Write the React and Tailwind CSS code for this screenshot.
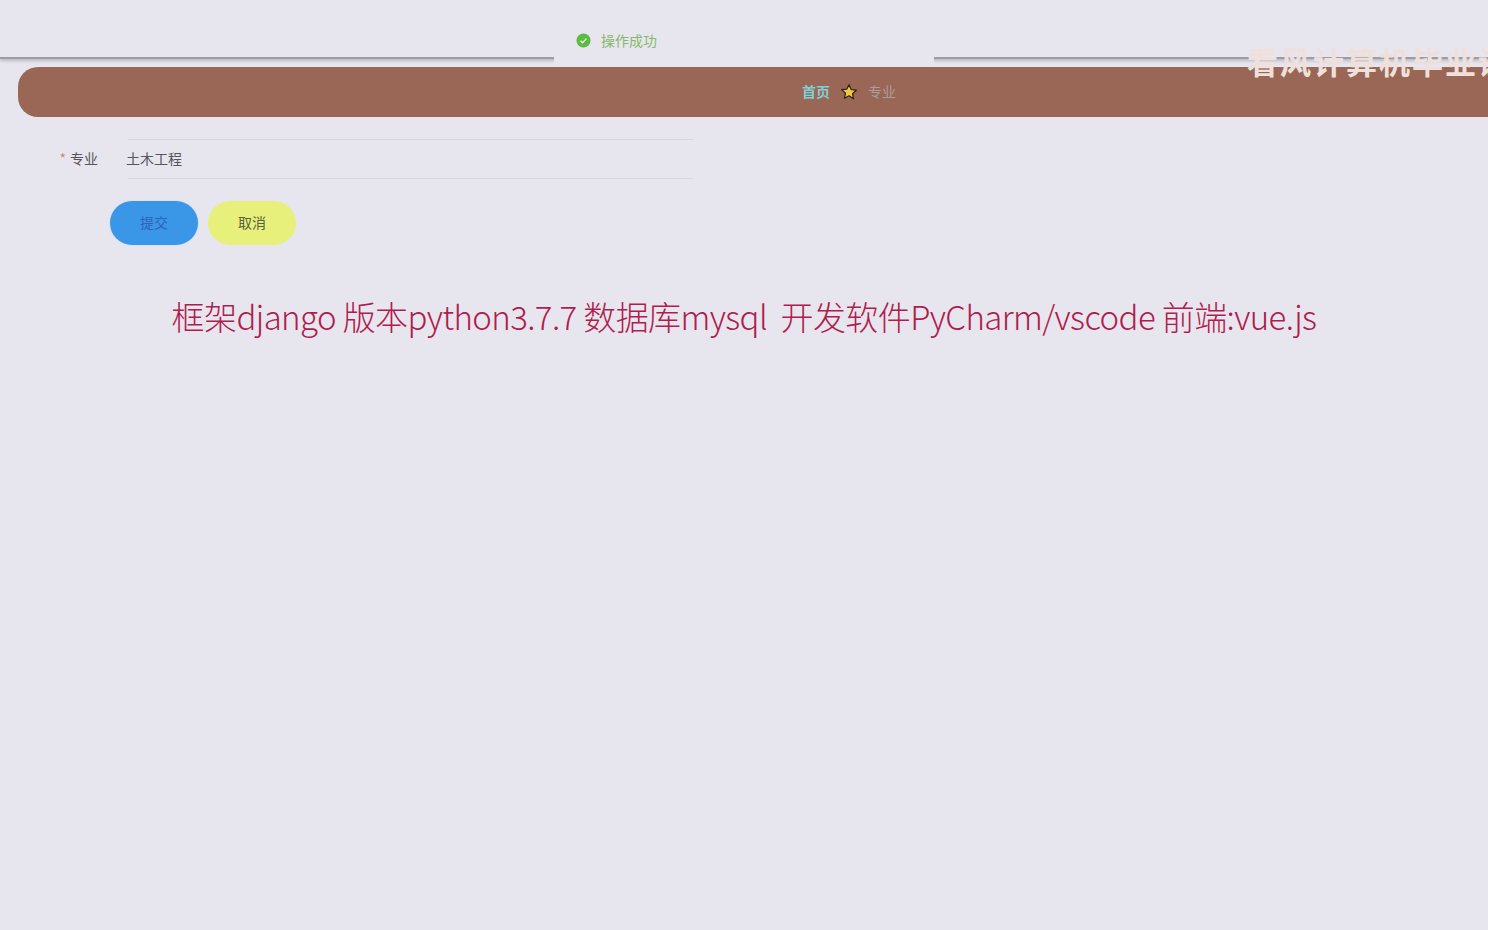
export default function App() {
  const cjk = "font-['Noto_Sans_CJK_SC',sans-serif]";
  return (
    <div className={`relative h-[930px] w-[1488px] overflow-hidden bg-[#e7e6ee] ${cjk}`}>
      <header className="h-[59px] border-b-2 border-[#9c9ca6] shadow-[0_2px_3px_rgba(120,120,130,0.4)]" />
      <nav className="ml-[18px] mt-[8px] flex h-[50px] items-center rounded-l-[20px] bg-[#9a6655] pb-[2px] pl-[784px] text-[14px] leading-none">
        <span className="font-bold text-[#7fd0d6]">首页</span>
        <svg className="mx-[10px] mt-[2px] h-[18px] w-[18px]" viewBox="0 0 24 24">
          <path d="M12 2.5l2.9 6.3 6.8.8-5 4.7 1.3 6.8L12 17l-6 3.4 1.3-6.8-5-4.7 6.8-.8z" fill="#f3c840" stroke="#2b2015" strokeWidth="1.6" strokeLinejoin="round" />
        </svg>
        <span className="text-[#aa9d9d]">专业</span>
      </nav>
      <form className="pt-[22px]">
        <div className="flex h-[40px] items-center">
          <label className="w-[98px] pb-[2px] text-right text-[14px] text-[#55555c]">
            <span className="mr-[4px] text-[#c98a8a]">*</span>专业
          </label>
          <div className="ml-[30px] flex h-[40px] w-[565px] items-center border-y border-[#d8d8de] pb-[1px] text-[14px] text-[#55555c]">
            <span className="-ml-[2px]">土木工程</span>
          </div>
        </div>
        <div className="ml-[110px] mt-[22px] flex gap-[10px]">
          <button type="button" className="h-[44px] w-[88px] rounded-[22px] bg-[#3a97e8] pb-[2px] text-[14px] text-[#2f62b8] shadow-[0_0_2px_#bcdcf5]">提交</button>
          <button type="button" className="h-[44px] w-[88px] rounded-[22px] bg-[#e6f07a] pb-[2px] text-[14px] text-[#5c6040]">取消</button>
        </div>
      </form>
      <p className="mt-[47px] whitespace-pre text-center text-[33px] font-light leading-[48px] tracking-[-0.6px] text-[#b01c4e]">
        框架django 版本python3.7.7 数据库mysql  开发软件PyCharm/vscode 前端:vue.js
      </p>
      <div className="absolute left-[554px] top-0 flex h-[66px] w-[380px] items-center bg-[#e7e6ee] pl-[22px] pt-[15px] text-[14px] text-[#86b86c]">
        <svg className="mr-[10px] h-[15px] w-[15px]" viewBox="0 0 16 16">
          <circle cx="8" cy="8" r="7.5" fill="#5cbb44" />
          <path d="M4.8 8.2l2.2 2.2 4.2-4.4" fill="none" stroke="#eef6e8" strokeWidth="1.5" />
        </svg>
        操作成功
      </div>
      <div className="absolute left-[1247px] top-[38px] whitespace-nowrap text-[31px] font-bold leading-[46px] tracking-[2px] text-[#efe0dc]">
        看风计算机毕业设计
      </div>
    </div>
  );
}
